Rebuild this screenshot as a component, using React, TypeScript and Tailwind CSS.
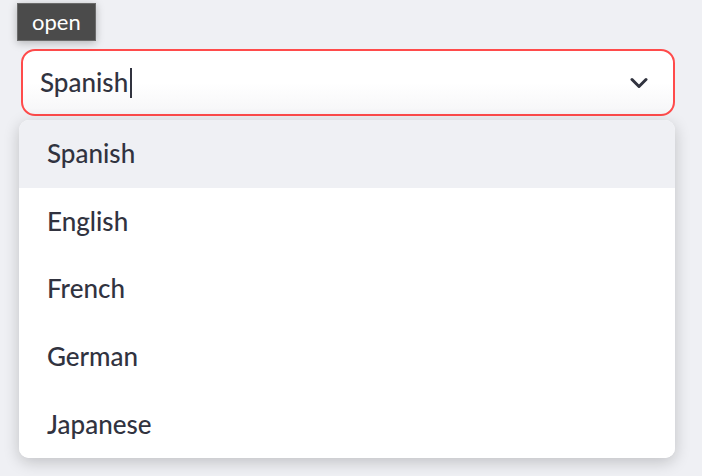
import React from 'react';

const options = ['Spanish', 'English', 'French', 'German', 'Japanese'];

const App: React.FC = () => {
  return (
    <div
      className="w-[702px] h-[476px] bg-[#eff0f4] overflow-hidden pt-[3px] pl-[17px] pr-[27px] text-[#31333f]"
      style={{ fontFamily: 'Lato, "Noto Sans", sans-serif' }}
    >
      {/* tooltip */}
      <div className="inline-flex items-center h-[38px] px-[14px] bg-[#4b4b4b] border border-[#6b6b6b] text-white text-[22px] leading-none shadow-[0_2px_8px_rgba(0,0,0,0.25)]">
        open
      </div>

      {/* select input */}
      <div className="mt-[8px] ml-[4px] h-[67px] flex items-center justify-between rounded-[14px] border-2 border-[#ff4b4b] bg-gradient-to-b from-white via-white to-[#f6f6f8] pl-[17px] pr-[25px]">
        <div className="flex items-center text-[26px] font-medium">
          <span>Spanish</span>
          <span className="ml-[2px] w-[2px] h-[30px] bg-[#31333f]" />
        </div>
        <svg width="18" height="12" viewBox="0 0 18 12" fill="none">
          <path d="M2 2.5l7 7 7-7" stroke="#31333f" strokeWidth="3" strokeLinecap="round" strokeLinejoin="round" />
        </svg>
      </div>

      {/* dropdown */}
      <div className="mt-[4px] ml-[2px] rounded-[10px] bg-white overflow-hidden shadow-[0_4px_16px_rgba(0,0,0,0.2)]">
        {options.map((opt, i) => (
          <div
            key={opt}
            className={`h-[67.6px] flex items-center pl-[28px] text-[26px] font-medium ${i === 0 ? 'bg-[#eff0f4]' : 'bg-white'}`}
          >
            {opt}
          </div>
        ))}
      </div>
    </div>
  );
};

export default App;
